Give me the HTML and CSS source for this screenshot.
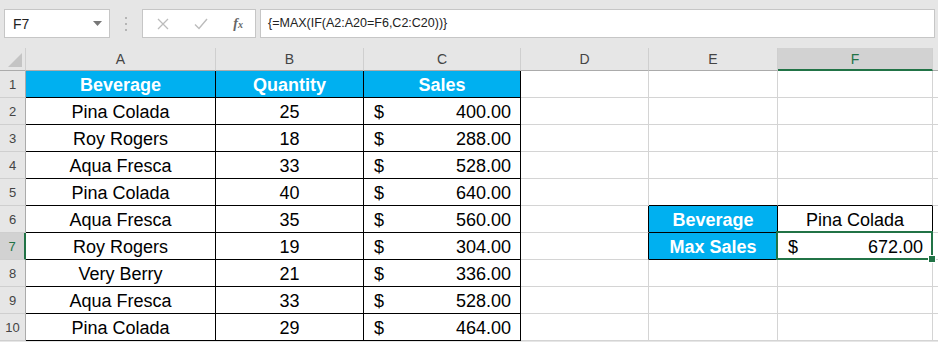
FILE: index.html
```html
<!DOCTYPE html>
<html lang="en">
<head>
    <meta charset="UTF-8">
    <meta name="viewport" content="width=device-width, initial-scale=1.0">
    <title>MAX IF array formula</title>
    <link rel="stylesheet" href="styles.css">
</head>
<body>
    <!-- Formula bar -->
    <div class="formula-bar">
        <div class="name-box">
            <span>F7</span>
            <svg class="drop" width="9" height="5" viewBox="0 0 9 5"><path d="M0 0h9L4.5 5z" fill="#777"/></svg>
        </div>
        <div class="grip">
            <svg width="3" height="14" viewBox="0 0 3 14"><rect x="0" y="0" width="2" height="2" fill="#b5b5b5"/><rect x="0" y="6" width="2" height="2" fill="#b5b5b5"/><rect x="0" y="12" width="2" height="2" fill="#b5b5b5"/></svg>
        </div>
        <div class="fx-buttons">
            <svg width="12" height="12" viewBox="0 0 12 12"><path d="M1 1l10 10M11 1L1 11" stroke="#bcbcbc" stroke-width="1.3" fill="none"/></svg>
            <svg width="14" height="12" viewBox="0 0 14 12"><path d="M1 6.5l4 4L13 1" stroke="#bcbcbc" stroke-width="1.4" fill="none"/></svg>
            <span class="fx">f<span class="fx-x">x</span></span>
        </div>
        <div class="formula-input">{=MAX(IF(A2:A20=F6,C2:C20))}</div>
    </div>

    <!-- Sheet grid -->
    <div class="sheet">
        <!-- column headers -->
        <div class="corner"><svg width="14" height="14" viewBox="0 0 14 14"><path d="M14 0v14H0z" fill="#c4c4c4"/></svg></div>
        <div class="ch">A</div>
        <div class="ch">B</div>
        <div class="ch">C</div>
        <div class="ch">D</div>
        <div class="ch">E</div>
        <div class="ch sel">F</div>
        <div class="ch fill"></div>

        <!-- row 1 -->
        <div class="rh">1</div>
        <div class="c hd">Beverage</div>
        <div class="c hd">Quantity</div>
        <div class="c hd">Sales</div>
        <div class="c"></div>
        <div class="c"></div>
        <div class="c"></div>
        <div class="c fill"></div>

        <!-- row 2 -->
        <div class="rh">2</div>
        <div class="c t">Pina Colada</div>
        <div class="c t">25</div>
        <div class="c t money"><span>$</span><span>400.00</span></div>
        <div class="c"></div>
        <div class="c"></div>
        <div class="c"></div>
        <div class="c fill"></div>

        <!-- row 3 -->
        <div class="rh">3</div>
        <div class="c t">Roy Rogers</div>
        <div class="c t">18</div>
        <div class="c t money"><span>$</span><span>288.00</span></div>
        <div class="c"></div>
        <div class="c"></div>
        <div class="c"></div>
        <div class="c fill"></div>

        <!-- row 4 -->
        <div class="rh">4</div>
        <div class="c t">Aqua Fresca</div>
        <div class="c t">33</div>
        <div class="c t money"><span>$</span><span>528.00</span></div>
        <div class="c"></div>
        <div class="c"></div>
        <div class="c"></div>
        <div class="c fill"></div>

        <!-- row 5 -->
        <div class="rh">5</div>
        <div class="c t">Pina Colada</div>
        <div class="c t">40</div>
        <div class="c t money"><span>$</span><span>640.00</span></div>
        <div class="c"></div>
        <div class="c bb"></div>
        <div class="c bb"></div>
        <div class="c fill"></div>

        <!-- row 6 -->
        <div class="rh">6</div>
        <div class="c t">Aqua Fresca</div>
        <div class="c t">35</div>
        <div class="c t money"><span>$</span><span>560.00</span></div>
        <div class="c br"></div>
        <div class="c hd">Beverage</div>
        <div class="c t">Pina Colada</div>
        <div class="c fill"></div>

        <!-- row 7 -->
        <div class="rh sel">7</div>
        <div class="c t">Roy Rogers</div>
        <div class="c t">19</div>
        <div class="c t money"><span>$</span><span>304.00</span></div>
        <div class="c br"></div>
        <div class="c hd">Max Sales</div>
        <div class="c t money active"><span>$</span><span>672.00</span></div>
        <div class="c fill"></div>

        <!-- row 8 -->
        <div class="rh">8</div>
        <div class="c t">Very Berry</div>
        <div class="c t">21</div>
        <div class="c t money"><span>$</span><span>336.00</span></div>
        <div class="c"></div>
        <div class="c"></div>
        <div class="c"></div>
        <div class="c fill"></div>

        <!-- row 9 -->
        <div class="rh">9</div>
        <div class="c t">Aqua Fresca</div>
        <div class="c t">33</div>
        <div class="c t money"><span>$</span><span>528.00</span></div>
        <div class="c"></div>
        <div class="c"></div>
        <div class="c"></div>
        <div class="c fill"></div>

        <!-- row 10 -->
        <div class="rh">10</div>
        <div class="c t">Pina Colada</div>
        <div class="c t">29</div>
        <div class="c t money"><span>$</span><span>464.00</span></div>
        <div class="c"></div>
        <div class="c"></div>
        <div class="c"></div>
        <div class="c fill"></div>
    </div>
</body>
</html>
```

FILE: styles.css
```css
* {
    box-sizing: border-box;
}
body {
    margin: 0;
    background-color: #e6e6e6;
    font-family: "Liberation Sans", Arial, sans-serif;
    overflow: hidden;
}
.formula-bar {
    display: flex;
    align-items: center;
    height: 48px;
    padding: 0 3px 1px 4px;
}
.name-box {
    display: flex;
    align-items: center;
    justify-content: space-between;
    width: 106px;
    height: 29px;
    padding: 0 7px 0 8px;
    background-color: #fff;
    border: 1px solid #c6c6c6;
    font-size: 14px;
    color: #222;
}
.grip {
    display: flex;
    align-items: center;
    justify-content: center;
    width: 32px;
}
.fx-buttons {
    display: flex;
    align-items: center;
    justify-content: space-between;
    width: 114px;
    height: 29px;
    padding: 0 12px 0 14px;
    background-color: #fff;
    border: 1px solid #c6c6c6;
}
.fx {
    font-family: "Liberation Serif", serif;
    font-style: italic;
    font-weight: bold;
    font-size: 14px;
    color: #666;
}
.fx-x {
    font-size: 10px;
}
.formula-input {
    flex: 1;
    height: 29px;
    margin-left: 4px;
    padding: 6px 7px;
    background-color: #fff;
    border: 1px solid #c6c6c6;
    font-size: 12.5px;
    color: #222;
}
.sheet {
    display: grid;
    grid-template-columns: 26px 190px 148px 157px 128px 129px 155px 1fr;
    grid-template-rows: 23px repeat(10, 27px);
    background-color: #fff;
}
.corner {
    display: flex;
    align-items: flex-end;
    justify-content: flex-end;
    padding: 0 3px 3px 0;
    background-color: #e6e6e6;
    border-right: 1px solid #cfcfcf;
    border-bottom: 1px solid #ababab;
}
.ch {
    display: flex;
    align-items: center;
    justify-content: center;
    background-color: #e6e6e6;
    border-right: 1px solid #cfcfcf;
    border-bottom: 1px solid #ababab;
    font-size: 14px;
    color: #444;
}
.ch.sel {
    background-color: #d2d2d2;
    color: #217346;
    border-bottom: 2px solid #217346;
}
.ch.fill {
    border-right: none;
}
.rh {
    display: flex;
    align-items: center;
    justify-content: center;
    padding-top: 1px;
    background-color: #e6e6e6;
    border-right: 1px solid #ababab;
    border-bottom: 1px solid #cfcfcf;
    font-size: 13px;
    color: #444;
}
.rh.sel {
    background-color: #d2d2d2;
    color: #217346;
    border-right: 2px solid #217346;
}
.c {
    display: flex;
    align-items: center;
    justify-content: center;
    padding-top: 2px;
    background-color: #fff;
    border-right: 1px solid #d4d4d4;
    border-bottom: 1px solid #d4d4d4;
    font-size: 18px;
    color: #000;
}
.c.fill {
    border-right: none;
}
.hd {
    background-color: #00b0f0;
    color: #fff;
    font-weight: bold;
    border-right-color: #000;
    border-bottom-color: #000;
}
.t {
    border-right-color: #000;
    border-bottom-color: #000;
}
.bb {
    border-bottom-color: #000;
}
.br {
    border-right-color: #000;
}
.money {
    justify-content: space-between;
    padding: 2px 9px 0 10px;
}
.active {
    position: relative;
}
.active::after {
    content: "";
    position: absolute;
    top: -2px;
    left: -2px;
    right: -1px;
    bottom: -1px;
    border: 2px solid #217346;
}
.active::before {
    content: "";
    position: absolute;
    right: -4px;
    bottom: -4px;
    width: 6px;
    height: 6px;
    background-color: #217346;
    border: 1px solid #fff;
    z-index: 1;
}
```
